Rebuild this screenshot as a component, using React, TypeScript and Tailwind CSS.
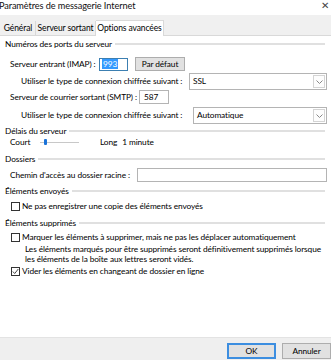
import React from "react";

const font = { fontFamily: 'Lato, "Noto Sans", sans-serif' };

function SectionTitle({ children, className = "" }: { children: React.ReactNode; className?: string }) {
  return (
    <div className={"flex items-center h-[12px] pl-[5px] pr-[6px] shrink-0 " + className}>
      <span className="whitespace-nowrap">{children}</span>
      <div className="flex-1 ml-[3px] h-[2px] bg-[#e0e0e0]" />
    </div>
  );
}

function Select({ value }: { value: string }) {
  return (
    <div className="flex-1 h-[17px] border border-[#b4b4b4] bg-white flex items-center">
      <span className="flex-1 pl-[3px]">{value}</span>
      <div className="w-[12px] h-[13px] mr-[1px] border border-[#d4d4d4] bg-[#fdfdfd] flex items-center justify-center">
        <svg width="7" height="4" viewBox="0 0 7 4">
          <path d="M0.5 0.5 L3.5 3.5 L6.5 0.5" stroke="#888" strokeWidth="1" fill="none" />
        </svg>
      </div>
    </div>
  );
}

function Checkbox({ checked }: { checked?: boolean }) {
  return (
    <div className="w-[9px] h-[9px] border border-[#333] bg-white flex items-center justify-center shrink-0">
      {checked && (
        <svg width="7" height="7" viewBox="0 0 7 7">
          <path d="M0.8 3.5 L2.7 5.5 L6.3 1" stroke="#333" strokeWidth="0.9" fill="none" />
        </svg>
      )}
    </div>
  );
}

export default function App() {
  return (
    <div className="w-[331px] h-[360px] bg-white text-[8.3px] tracking-[-0.1px] text-[#000] leading-none flex flex-col overflow-hidden whitespace-nowrap" style={font}>
      {/* Title */}
      <div className="h-[15px] shrink-0 flex items-start pt-[1px] justify-between bg-white">
        <span className="ml-[-1px] text-[9.2px] text-[#111]">Paramètres de messagerie Internet</span>
        <span className="mr-[2px] mt-[-1px] text-[10px] text-[#444]">✕</span>
      </div>
      {/* Tabs */}
      <div className="h-[21px] shrink-0 bg-[#f0f0f0] flex items-end pl-[1px] border-b border-[#d9d9d9] text-[8.5px]">
        <div className="w-[35px] h-[14px] flex items-center justify-center border-r border-[#d9d9d9] bg-[#f0f0f0]">Général</div>
        <div className="w-[60px] h-[14px] flex items-center justify-center border-r border-[#d9d9d9] bg-[#f0f0f0]">Serveur sortant</div>
        <div className="w-[68px] h-[16px] pb-[1px] flex items-center justify-center border border-b-0 border-l-0 border-[#d9d9d9] bg-white mb-[-1px]">Options avancées</div>
      </div>
      {/* Content */}
      <div className="flex-1 bg-white flex flex-col">
        <SectionTitle className="mt-[2px]">Numéros des ports du serveur</SectionTitle>
        <div className="flex items-center pl-[10px] mt-[7px] h-[14px] shrink-0">
          <span className="w-[89px] shrink-0">Serveur entrant (IMAP) :</span>
          <div className="w-[29px] h-[13px] border border-[#3c7fb1] flex items-center pl-[2px]">
            <span className="bg-[#3399ff] text-white px-[1px] leading-[10px]">993</span>
          </div>
          <div className="ml-[7px] w-[50px] h-[14px] border border-[#adadad] bg-[#e1e1e1] flex items-center justify-center">Par défaut</div>
        </div>
        <div className="flex items-center pl-[21px] pr-[4px] mt-[2px] h-[17px] shrink-0">
          <span className="w-[168px] shrink-0">Utiliser le type de connexion chiffrée suivant :</span>
          <Select value="SSL" />
        </div>
        <div className="flex items-center pl-[10px] h-[14px] shrink-0">
          <span className="w-[129px] shrink-0">Serveur de courrier sortant (SMTP) :</span>
          <div className="w-[30px] h-[14px] border border-[#b4b4b4] flex items-center pl-[4px]">587</div>
        </div>
        <div className="flex items-center pl-[21px] pr-[4px] mt-[3px] h-[17px] shrink-0">
          <span className="w-[172px] shrink-0">Utiliser le type de connexion chiffrée suivant :</span>
          <Select value="Automatique" />
        </div>
        <SectionTitle className="mt-[1px]">Délais du serveur</SectionTitle>
        <div className="flex items-center pl-[10px] h-[10px] shrink-0">
          <span className="w-[30px] shrink-0">Court</span>
          <div className="relative w-[60px] h-[7px] flex items-center shrink-0">
            <div className="w-[39px] h-[1px] bg-[#c8c8c8]" />
            <div className="absolute left-[4px] top-0 w-[3px] h-[6px] bg-[#1a73d9] rounded-[1px]" />
          </div>
          <span>Long</span>
          <span className="ml-[5px]">1 minute</span>
        </div>
        <SectionTitle className="mt-[6px]">Dossiers</SectionTitle>
        <div className="flex items-center pl-[10px] pr-[4px] mt-[3px] h-[14px] shrink-0">
          <span className="w-[127px] shrink-0">Chemin d'accès au dossier racine :</span>
          <div className="flex-1 h-[14px] border border-[#b4b4b4]" />
        </div>
        <SectionTitle className="mt-[3px]">Éléments envoyés</SectionTitle>
        <div className="flex items-center pl-[11px] mt-[3px] h-[12px] gap-[2px] shrink-0">
          <Checkbox />
          <span>Ne pas enregistrer une copie des éléments envoyés</span>
        </div>
        <SectionTitle className="mt-[5px]">Éléments supprimés</SectionTitle>
        <div className="flex items-center pl-[11px] mt-[2px] h-[12px] gap-[2px] shrink-0">
          <Checkbox />
          <span>Marquer les éléments à supprimer, mais ne pas les déplacer automatiquement</span>
        </div>
        <div className="pl-[25px] mt-[1px] leading-[10px] shrink-0">
          <div>Les éléments marqués pour être supprimés seront définitivement supprimés lorsque</div>
          <div>les éléments de la boîte aux lettres seront vidés.</div>
        </div>
        <div className="flex items-center pl-[11px] mt-[1px] h-[12px] gap-[2px] shrink-0">
          <Checkbox checked />
          <span>Vider les éléments en changeant de dossier en ligne</span>
        </div>
      </div>
      {/* Footer */}
      <div className="h-[23px] shrink-0 bg-[#efefef] border-t border-[#e3e3e3] flex items-start pt-[5px] pl-[227px] gap-[6px]">
        <div className="w-[49px] h-[16px] shrink-0 border-2 border-[#3c8ee0] bg-[#e1e1e1] flex items-center justify-center">OK</div>
        <div className="w-[49px] h-[16px] shrink-0 border border-[#adadad] bg-[#e1e1e1] flex items-center justify-center">Annuler</div>
      </div>
    </div>
  );
}
